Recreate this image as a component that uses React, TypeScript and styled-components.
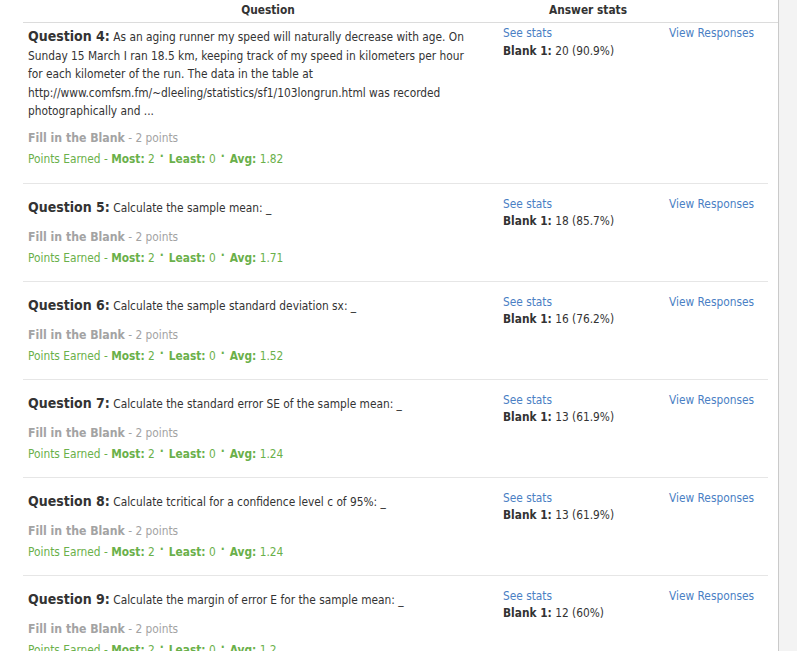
import React from "react";
import styled, { createGlobalStyle } from "styled-components";

const Global = createGlobalStyle`
  html, body { margin: 0; padding: 0; background: #fff; overflow: hidden; }
  body { font-family: "DejaVu Sans Condensed", "DejaVu Sans", sans-serif; font-stretch: condensed; color: #333; }
`;

const FONT_SIZE = "11.8px";

const Page = styled.div`
  display: flex;
  min-height: 100vh;
`;

const Main = styled.div`
  width: 755px;
  padding-left: 23px;
  background: #fff;
  flex: none;
`;

const Side = styled.div`
  flex: 1;
  border-left: 1px solid #cacaca;
  background: #f3f3f3;
`;

const Header = styled.div`
  display: grid;
  grid-template-columns: 490px 150px 1fr;
  height: 22px;
  border-bottom: 1px solid #dcdcdc;
`;

const HeadCell = styled.div`
  text-align: center;
  font-weight: bold;
  font-size: ${FONT_SIZE};
  line-height: 21px;
  color: #333;
`;

const Row = styled.div<{ $first?: boolean; $last?: boolean }>`
  display: grid;
  grid-template-columns: 475px 166px 1fr;
  margin-right: 10px;
  padding-top: ${(p) => (p.$first ? "0" : "10px")};
  padding-bottom: ${(p) => (p.$first ? "13px" : "11.5px")};
  border-bottom: ${(p) => (p.$last ? "none" : "1px solid #e6e6e6")};
`;

const QuestionCell = styled.div`
  padding: 4px 22px 0 5px;
`;

const QuestionText = styled.div`
  font-size: ${FONT_SIZE};
  line-height: 18.5px;
  color: #333;
`;

const QTitle = styled.span`
  font-size: 14px;
  font-weight: bold;
  color: #333;
`;

const Meta = styled.div<{ $first?: boolean }>`
  margin-top: ${(p) => (p.$first ? "7px" : "10px")};
  font-size: ${FONT_SIZE};
  line-height: 21px;
`;

const TypeLine = styled.div`
  color: #a3a3a3;
  b { font-weight: bold; font-size: 12.2px; }
`;

const EarnedLine = styled.div`
  color: #6ab04a;
  b { font-weight: bold; }
`;

const Dot = styled.span`
  display: inline-block;
  margin: 0 5px;
  position: relative;
  top: -3px;
  font-weight: bold;
`;

const StatsCell = styled.div`
  padding: 2px 5px 0 5px;
  font-size: ${FONT_SIZE};
  line-height: 17.5px;
`;

const Link = styled.a`
  display: block;
  color: #4a80c4;
  text-decoration: none;
  cursor: pointer;
`;

const BlankLine = styled.div`
  color: #333;
  b { font-weight: bold; }
`;

const ResponsesCell = styled.div`
  padding: 2px 5px 0 5px;
  font-size: ${FONT_SIZE};
  line-height: 17.5px;
`;

type Q = {
  n: number;
  text: React.ReactNode;
  count: string;
  avg: string;
};

const questions: Q[] = [
  {
    n: 4,
    text: (
      <>
        As an aging runner my speed will naturally decrease with age. On
        Sunday 15 March I ran 18.5 km, keeping track of my speed in kilometers per hour
        for each kilometer of the run. The data in the table at
        http://www.comfsm.fm/~dleeling/statistics/sf1/103longrun.html was recorded
        photographically and ...
      </>
    ),
    count: "20 (90.9%)",
    avg: "1.82",
  },
  { n: 5, text: "Calculate the sample mean: _", count: "18 (85.7%)", avg: "1.71" },
  { n: 6, text: "Calculate the sample standard deviation sx: _", count: "16 (76.2%)", avg: "1.52" },
  { n: 7, text: "Calculate the standard error SE of the sample mean: _", count: "13 (61.9%)", avg: "1.24" },
  { n: 8, text: "Calculate tcritical for a confidence level c of 95%: _", count: "13 (61.9%)", avg: "1.24" },
  { n: 9, text: "Calculate the margin of error E for the sample mean: _", count: "12 (60%)", avg: "1.2" },
];

export default function App() {
  return (
    <Page>
      <Global />
      <Main>
        <Header>
          <HeadCell>Question</HeadCell>
          <HeadCell>Answer stats</HeadCell>
          <HeadCell />
        </Header>
        {questions.map((q, i) => (
          <Row key={q.n} $first={i === 0} $last={i === questions.length - 1}>
            <QuestionCell>
              <QuestionText>
                <QTitle>Question {q.n}:</QTitle> {q.text}
              </QuestionText>
              <Meta $first={i === 0}>
                <TypeLine>
                  <b>Fill in the Blank</b> - 2 points
                </TypeLine>
                <EarnedLine>
                  Points Earned - <b>Most:</b> 2<Dot>·</Dot><b>Least:</b> 0<Dot>·</Dot>
                  <b>Avg:</b> {q.avg}
                </EarnedLine>
              </Meta>
            </QuestionCell>
            <StatsCell>
              <Link>See stats</Link>
              <BlankLine>
                <b>Blank 1:</b> {q.count}
              </BlankLine>
            </StatsCell>
            <ResponsesCell>
              <Link>View Responses</Link>
            </ResponsesCell>
          </Row>
        ))}
      </Main>
      <Side />
    </Page>
  );
}
